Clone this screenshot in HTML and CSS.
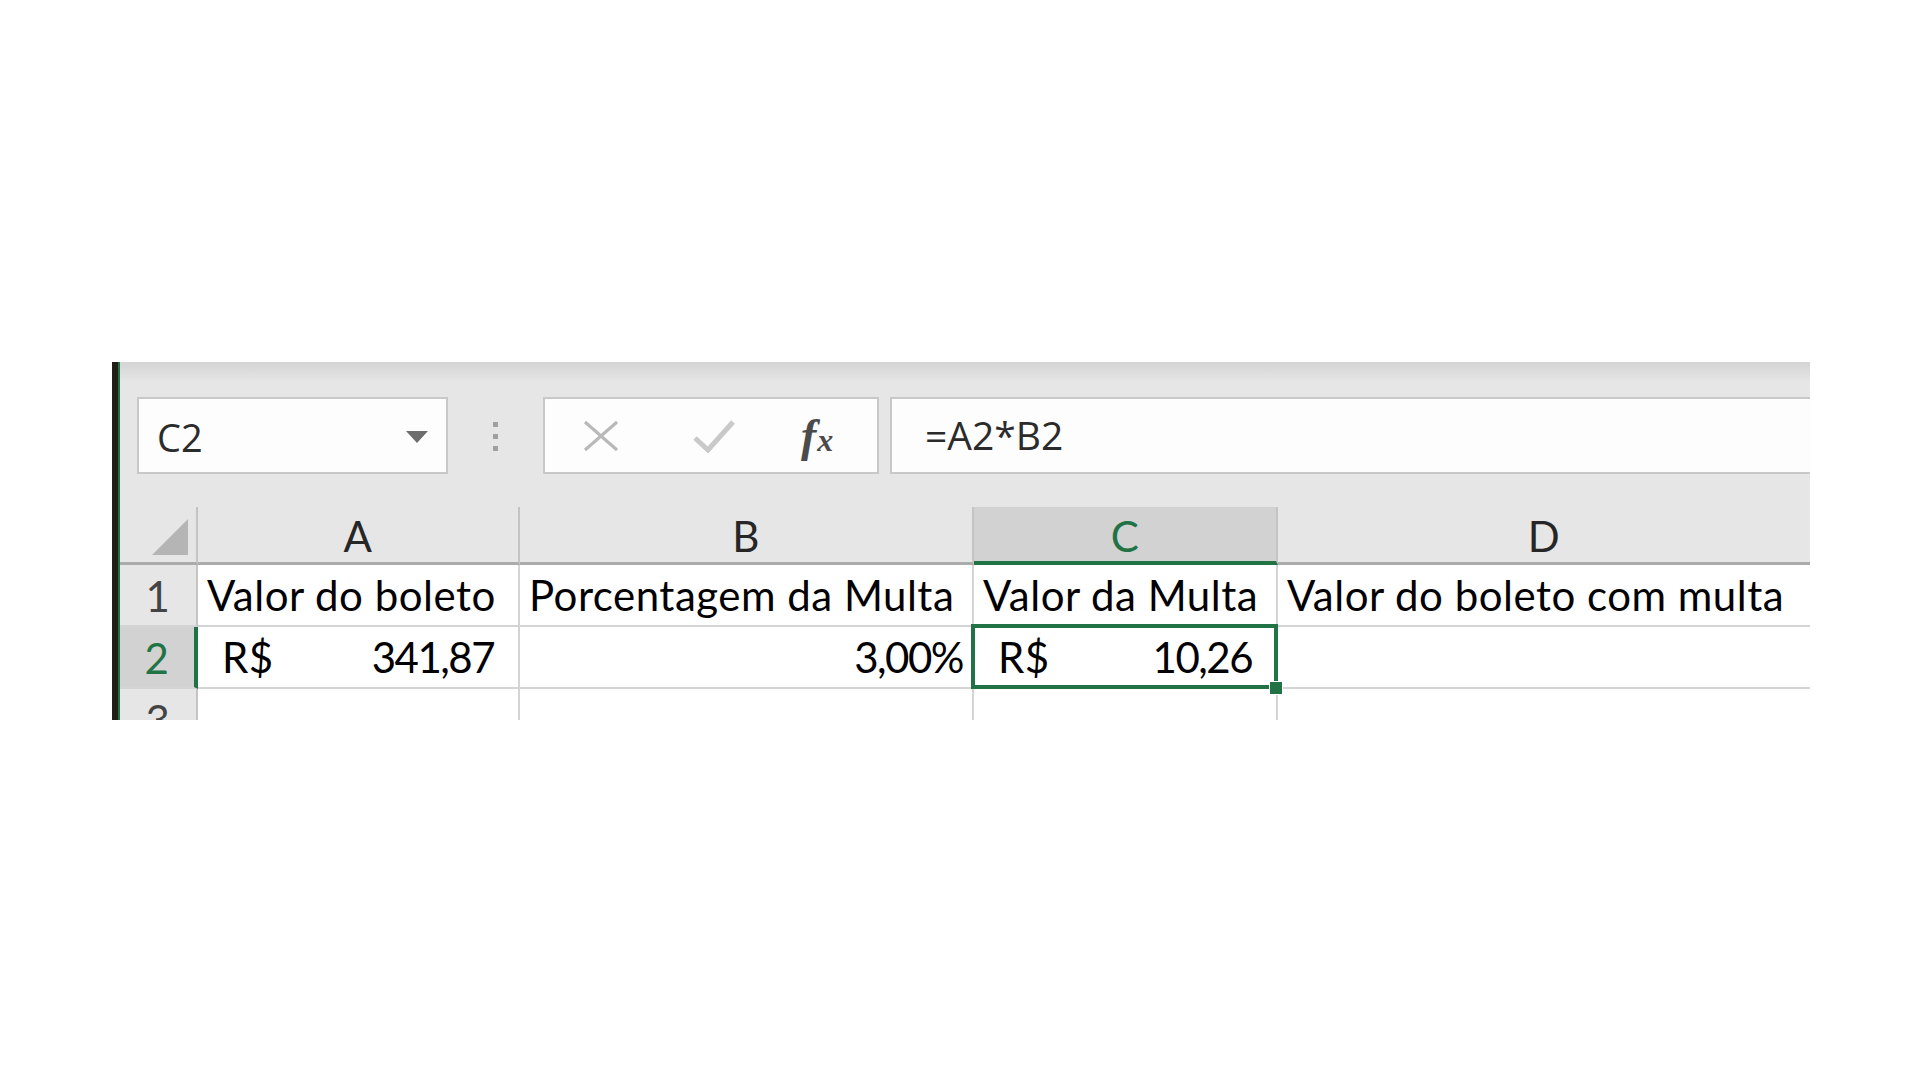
FILE: index.html
```html
<!DOCTYPE html>
<html lang="pt-BR">
<head>
  <meta charset="UTF-8">
  <title>Valor da Multa</title>
  <link rel="stylesheet" href="styles.css">
</head>
<body>

  <div class="janela">
    <div class="borda"></div>
    <div class="app">

      <div class="barra-formula">
        <div class="caixa-nome">
          <span>C2</span>
          <svg class="seta" width="22" height="12" viewBox="0 0 22 12"><path d="M0 0 H22 L11 12 Z" fill="#6d6d6d"/></svg>
        </div>
        <div class="pontos"><i></i><i></i><i></i></div>
        <div class="caixa-func">
          <svg class="ic-x" width="36" height="32" viewBox="0 0 36 32"><path d="M2 2 L34 30 M34 2 L2 30" stroke="#b8b8b8" stroke-width="3" fill="none"/></svg>
          <svg class="ic-ok" width="42" height="34" viewBox="0 0 42 34"><path d="M2 19 L15 31 L40 3" stroke="#c9c9c9" stroke-width="5" fill="none"/></svg>
          <span class="fx"><i>f</i><i class="x">x</i></span>
        </div>
        <div class="formula">=A2*B2</div>
      </div>

      <div class="planilha">
        <div class="canto"><span class="triangulo"></span></div>
        <div class="col-cab">A</div>
        <div class="col-cab">B</div>
        <div class="col-cab ativa">C</div>
        <div class="col-cab">D</div>

        <div class="lin-cab">1</div>
        <div class="celula">Valor do boleto</div>
        <div class="celula">Porcentagem da Multa</div>
        <div class="celula">Valor da Multa</div>
        <div class="celula">Valor do boleto com multa</div>

        <div class="lin-cab ativa">2</div>
        <div class="celula contabil"><span>R$</span><span class="num">341,87</span></div>
        <div class="celula direita"><span class="num">3,00%</span></div>
        <div class="celula contabil selecionada"><span>R$</span><span class="num">10,26</span><b class="alca"></b></div>
        <div class="celula"></div>

        <div class="lin-cab">3</div>
        <div class="celula"></div>
        <div class="celula"></div>
        <div class="celula"></div>
        <div class="celula"></div>
      </div>

    </div>
  </div>

</body>
</html>
```

FILE: styles.css
```css
* {
  box-sizing: border-box;
}

body {
  margin: 0;
  background: #fff;
}

.janela {
  display: flex;
  width: 1698px;
  height: 358px;
  margin: 362px 0 0 112px;
  overflow: hidden;
  background: #e6e6e6;
}

.borda {
  width: 8px;
  flex-shrink: 0;
  background: linear-gradient(to right, #221d18 0 6px, #217346 6px);
}

.app {
  flex: 1;
  display: flex;
  flex-direction: column;
  min-width: 0;
  background: linear-gradient(#d4d4d4, #e6e6e6 20px);
}

/* barra de fórmulas */
.barra-formula {
  display: flex;
  align-items: flex-start;
  height: 145px;
  padding: 35px 0 0 17px;
  flex-shrink: 0;
}

.caixa-nome,
.caixa-func,
.formula {
  height: 77px;
  border: 2px solid #c8c8c8;
  background: #fdfdfd;
}

.caixa-nome {
  display: flex;
  align-items: center;
  justify-content: space-between;
  width: 311px;
  padding: 0 18px 0 18px;
  font-family: "Open Sans", sans-serif;
  font-size: 38px;
  color: #2b2b2b;
}

.caixa-nome span {
  margin-top: 2px;
}

.seta {
  margin-top: 2px;
}

.pontos {
  display: flex;
  flex-direction: column;
  align-items: center;
  gap: 7px;
  width: 95px;
  padding-top: 25px;
}

.pontos i {
  width: 5px;
  height: 5px;
  background: #a0a0a0;
}

.caixa-func {
  display: flex;
  align-items: center;
  width: 336px;
  margin-right: 11px;
  padding-left: 38px;
}

.ic-x {
  margin-right: 74px;
}

.ic-ok {
  margin-right: 66px;
}

.fx {
  font-family: "Liberation Serif", serif;
  color: #4b4b4b;
  line-height: 1;
}

.fx i {
  font-size: 46px;
  font-weight: bold;
}

.fx .x {
  font-size: 32px;
  margin-left: 1px;
}

.formula {
  flex: 1;
  border-right: none;
  padding-left: 33px;
  font-family: "Open Sans", sans-serif;
  font-size: 39px;
  line-height: 72px;
  color: #2b2b2b;
}

/* grade */
.planilha {
  display: grid;
  width: 1692px;
  grid-template-columns: 78px 322px 454px 304px 1fr;
  grid-template-rows: 58px 62px 62px 62px;
  font-family: "Lato", sans-serif;
  font-size: 42px;
  letter-spacing: 0.5px;
  color: #000;
}

.canto {
  position: relative;
  border-right: 2px solid #c4c4c4;
  border-bottom: 3px solid #ababab;
}

.triangulo {
  position: absolute;
  right: 8px;
  bottom: 7px;
  width: 36px;
  height: 36px;
  background: #b5b5b5;
  clip-path: polygon(100% 0, 100% 100%, 0 100%);
}

.col-cab {
  text-align: center;
  line-height: 55px;
  padding-top: 2px;
  color: #262626;
  border-right: 2px solid #c4c4c4;
  border-bottom: 3px solid #ababab;
}

.col-cab.ativa {
  background: #d2d2d2;
  color: #217346;
  border-bottom: 4px solid #217346;
}

.lin-cab {
  text-align: center;
  line-height: 60px;
  padding-top: 1px;
  color: #444;
  border-right: 2px solid #c4c4c4;
  border-bottom: 2px solid #d4d4d4;
}

.lin-cab.ativa {
  background: #d2d2d2;
  color: #217346;
  border-right: 4px solid #217346;
}

.celula {
  position: relative;
  padding: 1px 0 0 9px;
  line-height: 58px;
  white-space: nowrap;
  background: #fff;
  border-right: 2px solid #d4d4d4;
  border-bottom: 2px solid #d4d4d4;
}

.contabil {
  display: flex;
  justify-content: space-between;
  padding: 1px 24px 0 24px;
}

.direita {
  text-align: right;
  padding-right: 9px;
}

.num {
  letter-spacing: -1.5px;
}

.selecionada::after {
  content: "";
  position: absolute;
  top: -3px;
  left: -3px;
  right: -2px;
  bottom: -2px;
  border: 4px solid #217346;
}

.alca {
  position: absolute;
  right: -7px;
  bottom: -8px;
  width: 14px;
  height: 14px;
  background: #217346;
  border: 1px solid #fff;
  z-index: 1;
}
```
